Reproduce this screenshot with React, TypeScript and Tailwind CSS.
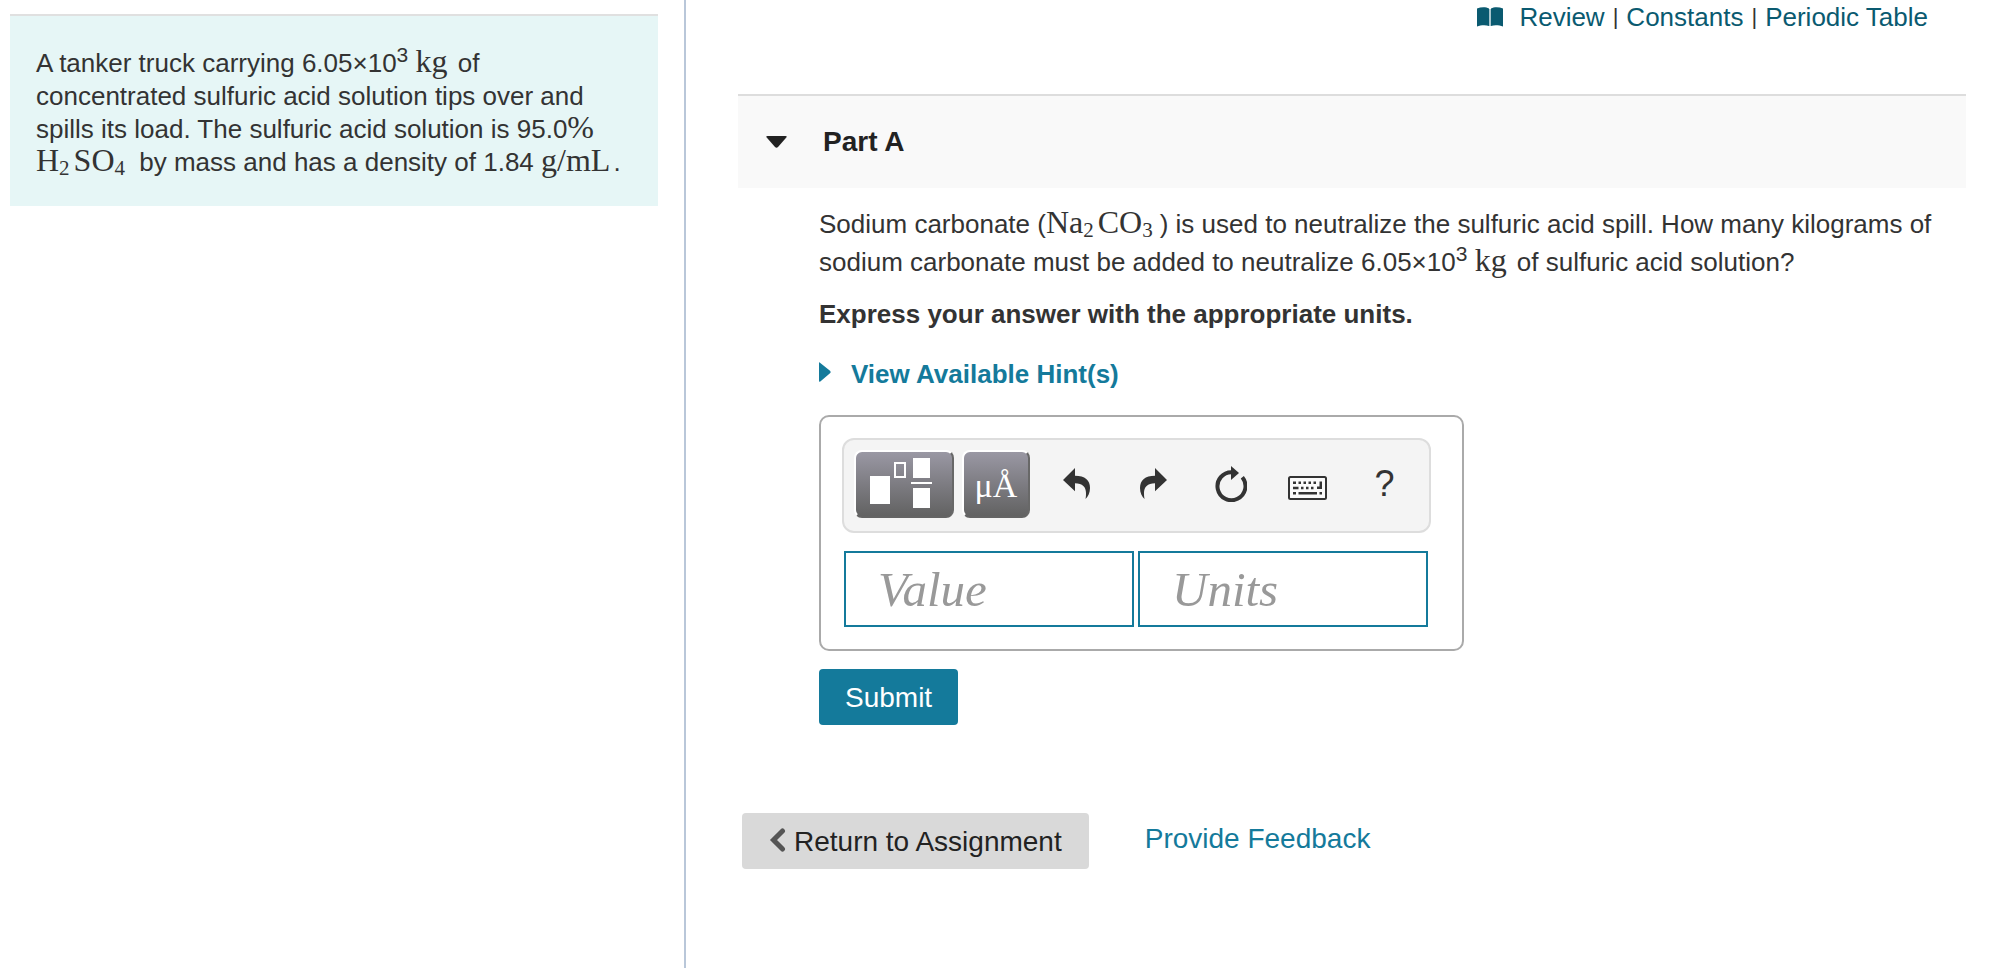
import React from "react";

function M({ children }: { children: React.ReactNode }) {
  return (
    <span className="mr-[3px] font-['Liberation_Serif',serif] text-[32px] leading-7 whitespace-nowrap">
      {children}
    </span>
  );
}

function Sub({ children }: { children: React.ReactNode }) {
  return <sub className="-bottom-1 mr-1 text-[21px]">{children}</sub>;
}

function Sup({ children }: { children: React.ReactNode }) {
  return <sup className="text-[21px]">{children}</sup>;
}

const toolButton =
  "flex h-[68px] items-center justify-center rounded-lg border-2 border-t-white border-l-white border-r-[#686868] border-b-[#646464] bg-linear-to-b from-[#9a98a4] to-[#626262]";

const iconButton = "flex h-[68px] w-[77px] items-center justify-center text-[#333]";

const arrow =
  "M0 12 12 0v7.700C22 7.700 27 12 27 20c0 5-2 8.500-4.500 11C23 29 23 27 23 25c0-6-3.500-9.800-11-9.800v8.100z";

function Keyboard() {
  return (
    <svg width="39" height="24" viewBox="0 0 39 24" className="mt-2" fill="currentColor" aria-hidden="true">
      <rect x="1" y="1" width="37" height="22" rx="1.500" fill="#fafafa" stroke="currentColor" strokeWidth="2" />
      <path d="M5 5.500h3v2.500h-3zM10.500 5.500h2.500v2.500h-2.500zM15.500 5.500h2.500v2.500h-2.500zM20.500 5.500h2.500v2.500h-2.500zM25.500 5.500h2.500v2.500h-2.500zM31.500 5.500h2.500v7.500h-5v-2.500h2.500zM5 10.700h5.500v2.500h-5.500zM13 10.700h2.500v2.500h-2.500zM18 10.700h2.500v2.500h-2.500zM23 10.700h2.500v2.500h-2.500zM5 16h3v2.500h-3zM10.500 16h18.500v2.500h-18.500zM31.500 16h2.500v2.500h-2.500z" />
    </svg>
  );
}

const field =
  "h-[76px] min-w-0 flex-1 border-2 border-[#147a9b] px-8 font-['Liberation_Serif',serif] text-[49px] italic text-[#333] outline-none placeholder:text-[#999]";

export default function App() {
  return (
    <div className="grid min-h-screen grid-cols-[686px_minmax(0,1fr)] bg-white font-['Liberation_Sans',Arial,sans-serif] text-[26px] text-[#333]">
      <aside className="border-r-2 border-[#b9c7d9] pt-3.5 pr-[26px] pl-2.5">
        <p className="border-t-2 border-[#e0e0e0] bg-[#e6f6f6] pt-[31px] pr-[30px] pb-[27px] pl-[26px] leading-[33px]">
          A tanker truck carrying 6.05×10<Sup>3</Sup> <M>kg</M> of concentrated sulfuric acid solution tips
          over and spills its load. The sulfuric acid solution is 95.0<M>%</M>{" "}
          <M>
            H<Sub>2</Sub>SO<Sub>4</Sub>
          </M>{" "}
          by mass and has a density of 1.84 <M>g/mL</M>.
        </p>
      </aside>

      <main className="pl-[52px]">
        <nav className="flex items-center justify-end pr-[82px] leading-[34px]">
          <svg width="26" height="20" viewBox="0 0 26 20" className="mr-4" fill="#0a5a70" aria-hidden="true">
            <path d="M0 1.500C4-.3 9-.3 12 1.500V19C9 18 4 18 0 19.500zM26 1.500C22-.3 17-.3 14 1.500V19c3-1 8-1 12 .5z" />
            <path d="M12 2h2v17h-2z" opacity=".35" />
          </svg>
          <a href="#review" className="text-[#0a5a70]">Review</a>
          <span className="mx-2 text-[22px] leading-none">|</span>
          <a href="#constants" className="text-[#0a5a70]">Constants</a>
          <span className="mx-2 text-[22px] leading-none">|</span>
          <a href="#periodic-table" className="text-[#0a5a70]">Periodic Table</a>
        </nav>

        <section className="mt-[60px]">
          <h2 className="mr-11 border-t-2 border-[#ddd] bg-[#f9f9f9] text-[28px] text-[#222]">
            <button className="flex h-[92px] w-full items-center pl-7 text-left font-bold" aria-expanded="true">
              <svg width="21" height="12" viewBox="0 0 21 12" className="mr-9" fill="currentColor" aria-hidden="true">
                <path d="M1.500 0h18q2 0 .8 1.600L12 11q-1.500 1.500-3 0L.7 1.600Q-.5 0 1.500 0z" />
              </svg>
              Part A
            </button>
          </h2>

          <div className="pt-[17px] pr-16 pl-[81px] leading-[38px]">
            <p>
              Sodium carbonate (
              <M>
                Na<Sub>2</Sub>CO<Sub>3</Sub>
              </M>
              ) is used to neutralize the sulfuric acid spill. How many kilograms of sodium carbonate must be
              added to neutralize 6.05×10<Sup>3</Sup> <M>kg</M> of sulfuric acid solution?
            </p>
            <p className="mt-3.5 font-bold">Express your answer with the appropriate units.</p>
            <button className="mt-[22px] flex items-center font-bold text-[#147a9b]">
              <svg width="12" height="20" viewBox="0 0 12 20" className="mr-5 mb-1" fill="currentColor" aria-hidden="true">
                <path d="M0 1.500Q0-.5 1.300 1L11 8.700q1.300 1.300 0 2.600L1.300 19.500Q0 20.500 0 18.500z" />
              </svg>
              View Available Hint(s)
            </button>

            <div className="mt-[22px] w-[645px] max-w-full rounded-[10px] border-2 border-[#aaa] pt-[21px] pr-[31px] pb-[22px] pl-[21px]">
              <div className="flex h-[95px] items-center rounded-xl border-2 border-[#ddd] bg-[#f4f4f4] pb-1 pl-2.5">
                <button className={toolButton + " w-[100px] pr-1.5"} aria-label="Templates">
                  <svg width="62" height="51" viewBox="0 0 62 51" fill="#fff" aria-hidden="true">
                    <path d="M0 18h20v28H0zM43 0h17v20H43zM43 30h17v20H43zM41 24h21v2H41z" />
                    <rect x="25" y="5" width="10" height="14" fill="none" stroke="#fff" strokeWidth="2" />
                  </svg>
                </button>
                <button
                  className={toolButton + " ml-2 w-[68px] pt-1 font-['Liberation_Serif',serif] text-[34px] text-white"}
                  aria-label="Symbols"
                >
                  μÅ
                </button>
                <button className={iconButton + " ml-2"} aria-label="Undo">
                  <svg width="27" height="32" viewBox="0 0 27 32" fill="currentColor" aria-hidden="true">
                    <path d={arrow} />
                  </svg>
                </button>
                <button className={iconButton} aria-label="Redo">
                  <svg width="27" height="32" viewBox="0 0 27 32" fill="currentColor" aria-hidden="true">
                    <path d={arrow} transform="matrix(-1 0 0 1 27 0)" />
                  </svg>
                </button>
                <button className={iconButton} aria-label="Reset">
                  <svg width="32" height="36" viewBox="0 0 32 36" fill="currentColor" aria-hidden="true">
                    <path
                      d="M27.300 11.300A14 14 0 1 1 17 6.200"
                      fill="none"
                      stroke="currentColor"
                      strokeWidth="4"
                    />
                    <path d="M16 0 24 7 16 14z" />
                  </svg>
                </button>
                <button className={iconButton} aria-label="Keyboard shortcuts">
                  <Keyboard />
                </button>
                <button className={iconButton + " text-4xl"}>?</button>
              </div>
              <div className="mt-[18px] mr-[3px] ml-0.5 flex gap-1">
                <input className={field} placeholder="Value" aria-label="Value" />
                <input className={field} placeholder="Units" aria-label="Units" />
              </div>
            </div>

            <button className="mt-[18px] block h-14 rounded bg-[#147a9b] px-[26px] pt-0.5 text-[28px] text-white">
              Submit
            </button>
          </div>
        </section>

        <footer className="mt-[88px] flex items-start gap-14 pl-1 text-[28px]">
          <button className="flex h-14 items-center rounded bg-[#d9d9d9] px-[27px] pt-0.5 text-[#222]">
            <svg width="17" height="24" viewBox="0 0 17 24" className="mr-2 mb-1" aria-hidden="true">
              <path d="M13.500 3 4.500 12l9 9" fill="none" stroke="#555" strokeWidth="5" strokeLinecap="round" />
            </svg>
            Return to Assignment
          </button>
          <a href="#feedback" className="leading-[52px] text-[#147a9b]">Provide Feedback</a>
        </footer>
      </main>
    </div>
  );
}
